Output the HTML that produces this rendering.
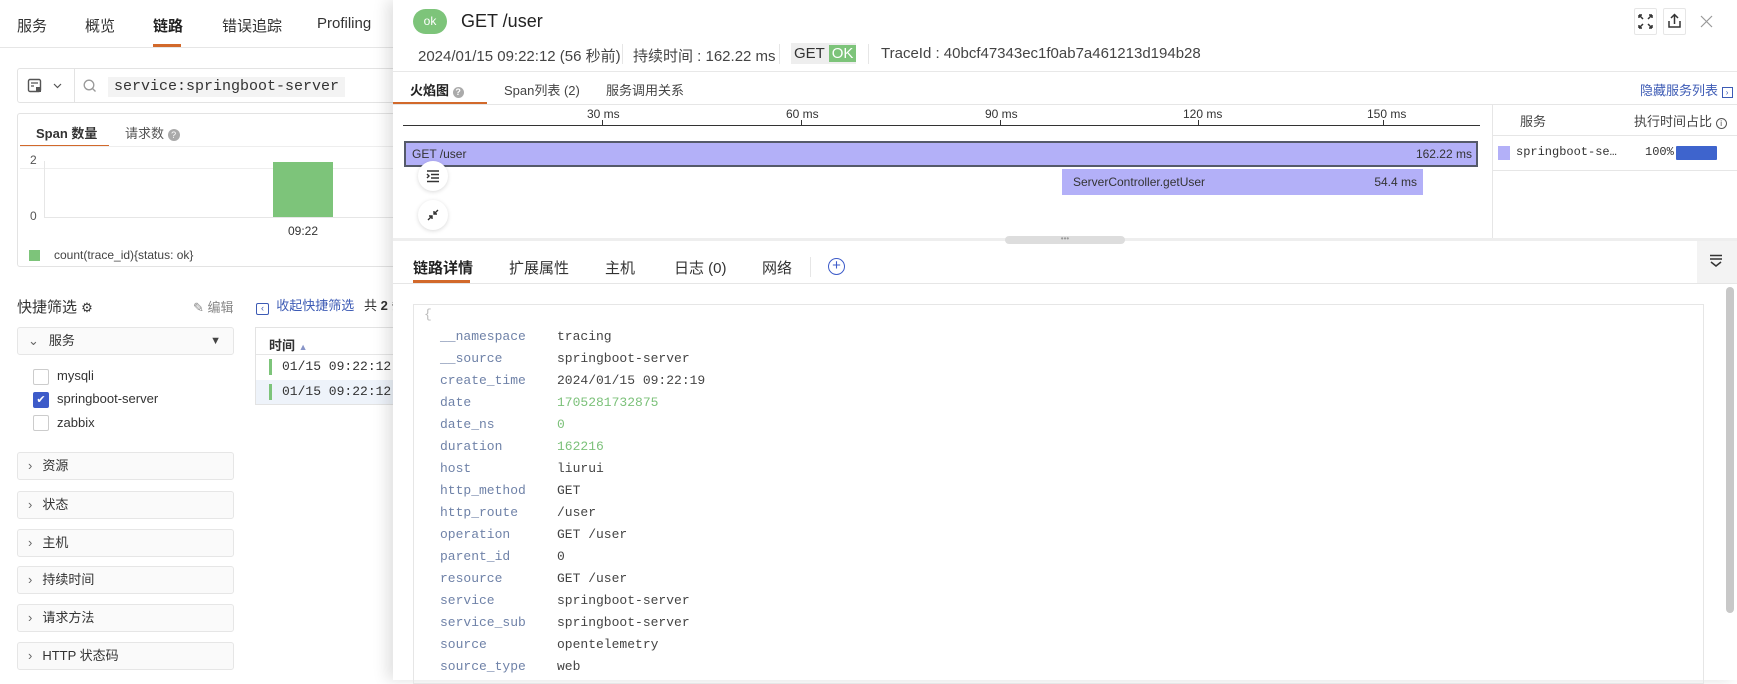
<!DOCTYPE html>
<html><head><meta charset="utf-8"><style>
*{box-sizing:border-box;margin:0;padding:0}
body{width:1737px;height:680px;overflow:hidden;position:relative;background:#fff;font-family:"Liberation Sans","Noto Sans CJK SC",sans-serif;color:#333;font-size:13px}
.a{position:absolute;white-space:nowrap}
.mono{font-family:"Liberation Mono","DejaVu Sans Mono",monospace}
.box{position:absolute;border:1px solid #e3e3e3;border-radius:3px;background:#fff}
.coll{position:absolute;left:17px;width:217px;height:28px;border:1px solid #e6e6e6;border-radius:3px;background:#fafafa;font-size:13px;line-height:26px;padding-left:10px;color:#333}
.coll span{color:#666;margin-right:10px}
.cb{position:absolute;width:16px;height:16px;border:1px solid #ccc;border-radius:2px;background:#fff}
.k{position:absolute;left:440px;color:#6f82a8;font-family:"Liberation Mono",monospace;font-size:13px}
.v{position:absolute;left:557px;color:#444;font-family:"Liberation Mono",monospace;font-size:13px}
.g{color:#7cc17a}
</style></head><body>
<!-- left nav -->
<div class="a" style="left:17px;top:15px;font-size:15px;color:#333">服务</div>
<div class="a" style="left:85px;top:15px;font-size:15px;color:#333">概览</div>
<div class="a" style="left:153px;top:15px;font-size:15px;font-weight:bold;color:#222">链路</div>
<div class="a" style="left:153px;top:44px;width:28px;height:3px;background:#d2692b"></div>
<div class="a" style="left:222px;top:15px;font-size:15px;color:#333">错误追踪</div>
<div class="a" style="left:317px;top:15px;font-size:15px;color:#333">Profiling</div>
<div class="a" style="left:0;top:47px;width:393px;height:1px;background:#e6e6e6"></div>
<!-- search -->
<div class="box" style="left:17px;top:68px;width:400px;height:35px"></div>
<div class="a" style="left:74px;top:68px;width:1px;height:35px;background:#e3e3e3"></div>
<svg class="a" style="left:27px;top:78px" width="16" height="16" viewBox="0 0 16 16"><rect x="1.5" y="1.5" width="12" height="12" rx="1.5" fill="none" stroke="#555" stroke-width="1.4"/><path d="M4 5h7M4 8h3" stroke="#555" stroke-width="1.3"/><rect x="9" y="9" width="5" height="5" fill="#555"/></svg>
<svg class="a" style="left:53px;top:83px" width="9" height="6" viewBox="0 0 9 6"><path d="M1 1l3.5 3.5L8 1" fill="none" stroke="#555" stroke-width="1.2"/></svg>
<svg class="a" style="left:83px;top:79px" width="14" height="14" viewBox="0 0 14 14"><circle cx="6" cy="6" r="4.8" fill="none" stroke="#999" stroke-width="1.3"/><path d="M9.5 9.5l3 3" stroke="#999" stroke-width="1.3"/></svg>
<div class="a mono" style="left:108px;top:77px;font-size:15px;color:#333;background:#f3f3f3;padding:0 6px;height:20px;line-height:19px">service:springboot-server</div>
<!-- chart card -->
<div class="box" style="left:17px;top:113px;width:400px;height:154px"></div>
<div class="a" style="left:36px;top:123px;font-size:13px;font-weight:bold;color:#333">Span 数量</div>
<div class="a" style="left:20px;top:168px;width:380px;height:1px;background:#eee"></div>
<div class="a" style="left:20px;top:167px;width:89px;height:2px;background:#d2692b;display:none"></div>
<div class="a" style="left:20px;top:145px;width:89px;height:2px;background:#d2692b"></div>
<div class="a" style="left:20px;top:146px;width:380px;height:1px;background:#eee"></div>
<div class="a" style="left:125px;top:123px;font-size:13px;color:#555">请求数 <span style="display:inline-block;width:12px;height:12px;border-radius:50%;background:#aaa;color:#fff;font-size:9px;text-align:center;line-height:12px">?</span></div>
<div class="a" style="left:30px;top:153px;font-size:12px;color:#555">2</div>
<div class="a" style="left:30px;top:209px;font-size:12px;color:#555">0</div>
<div class="a" style="left:44px;top:161px;width:1px;height:57px;background:#e6e6e6"></div>
<div class="a" style="left:44px;top:217px;width:350px;height:1px;background:#e6e6e6"></div>
<div class="a" style="left:273px;top:162px;width:60px;height:55px;background:#7dc47a"></div>
<div class="a" style="left:288px;top:224px;font-size:12px;color:#333">09:22</div>
<div class="a" style="left:29px;top:250px;width:11px;height:11px;background:#7dc47a"></div>
<div class="a" style="left:54px;top:248px;font-size:12px;color:#444">count(trace_id){status: ok}</div>
<!-- quick filters -->
<div class="a" style="left:17px;top:296px;font-size:15px;color:#333">快捷筛选 <span style="font-size:13px">⚙</span></div>
<div class="a" style="left:193px;top:297px;font-size:13px;color:#888">✎ 编辑</div>
<div class="a" style="left:256px;top:295px;font-size:13px;color:#3d5bb5"><span style="display:inline-block;width:13px;height:12px;border:1.3px solid #3d5bb5;border-radius:2px;font-size:9px;line-height:9px;text-align:center;vertical-align:-1px">‹</span>&nbsp; 收起快捷筛选</div>
<div class="a" style="left:364px;top:295px;font-size:13px;color:#333">共 <b>2</b> 条</div>
<div class="coll" style="top:327px;height:28px"><span>⌄</span>服务<b style="position:absolute;right:12px;font-size:11px;color:#444">▼</b></div>
<div class="cb" style="left:33px;top:369px"></div><div class="a" style="left:57px;top:368px;font-size:13px">mysqli</div>
<div class="cb" style="left:33px;top:392px;background:#3d5bc9;border-color:#3d5bc9;color:#fff;font-size:11px;text-align:center;line-height:14px">✔</div><div class="a" style="left:57px;top:391px;font-size:13px">springboot-server</div>
<div class="cb" style="left:33px;top:415px"></div><div class="a" style="left:57px;top:415px;font-size:13px">zabbix</div>
<div class="coll" style="top:452px"><span>›</span>资源</div>
<div class="coll" style="top:491px"><span>›</span>状态</div>
<div class="coll" style="top:529px"><span>›</span>主机</div>
<div class="coll" style="top:566px"><span>›</span>持续时间</div>
<div class="coll" style="top:604px"><span>›</span>请求方法</div>
<div class="coll" style="top:642px"><span>›</span>HTTP 状态码</div>
<!-- table -->
<div class="box" style="left:255px;top:327px;width:200px;height:78px;border-radius:0"></div>
<div class="a" style="left:269px;top:335px;font-size:13px;font-weight:bold">时间 <span style="color:#8895c8;font-size:9px">▲</span></div>
<div class="a" style="left:256px;top:354px;width:200px;height:1px;background:#e6e6e6"></div>
<div class="a" style="left:256px;top:380px;width:200px;height:24px;background:#eef3fa"></div>
<div class="a" style="left:269px;top:359px;width:3px;height:16px;background:#7dc47a"></div>
<div class="a mono" style="left:282px;top:359px;font-size:13px">01/15 09:22:12.9</div>
<div class="a" style="left:269px;top:384px;width:3px;height:16px;background:#7dc47a"></div>
<div class="a mono" style="left:282px;top:384px;font-size:13px">01/15 09:22:12.8</div>

<!-- drawer -->
<div class="a" style="left:393px;top:0;width:1344px;height:680px;background:#fff;box-shadow:-6px 0 14px rgba(0,0,0,0.12)"></div>
<div class="a" style="left:413px;top:9px;width:34px;height:25px;border-radius:13px;background:#7dc47a;color:#fff;font-size:12px;text-align:center;line-height:25px">ok</div>
<div class="a" style="left:461px;top:11px;font-size:18px;color:#222">GET /user</div>
<div class="a" style="left:418px;top:45px;font-size:15px;color:#444">2024/01/15 09:22:12 (56 秒前)</div>
<div class="a" style="left:622px;top:44px;width:1px;height:20px;background:#e6e6e6"></div>
<div class="a" style="left:633px;top:45px;font-size:15px;color:#444">持续时间 : 162.22 ms</div>
<div class="a" style="left:779px;top:44px;width:1px;height:20px;background:#e6e6e6"></div>
<div class="a" style="left:791px;top:43px;height:21px;background:#eee;font-size:15px;line-height:21px;padding:0 3px;color:#333">GET <span style="background:#7dc47a;color:#fff;padding:0 3px;margin-right:-3px">OK</span></div>
<div class="a" style="left:868px;top:44px;width:1px;height:20px;background:#e6e6e6"></div>
<div class="a" style="left:881px;top:45px;font-size:15px;color:#444">TraceId : 40bcf47343ec1f0ab7a461213d194b28</div>
<div class="a" style="left:1634px;top:8px;width:23px;height:27px;border:1px solid #e6e6e6;border-radius:2px"></div>
<svg class="a" style="left:1638px;top:14px" width="15" height="15" viewBox="0 0 15 15"><path d="M1 1l4 4M1 1v3M1 1h3M14 1l-4 4M14 1v3M14 1h-3M1 14l4-4M1 14v-3M1 14h3M14 14l-4-4M14 14v-3M14 14h-3" stroke="#333" stroke-width="1.5" fill="none"/></svg>
<div class="a" style="left:1663px;top:8px;width:23px;height:27px;border:1px solid #e6e6e6;border-radius:2px"></div>
<svg class="a" style="left:1667px;top:13px" width="15" height="16" viewBox="0 0 15 16"><path d="M7.5 11V2M4 5l3.5-3.5L11 5M2 8v6h11V8" stroke="#333" stroke-width="1.5" fill="none"/></svg>
<svg class="a" style="left:1700px;top:15px" width="13" height="13" viewBox="0 0 13 13"><path d="M1 1l11 11M12 1L1 12" stroke="#999" stroke-width="1.2"/></svg>
<div class="a" style="left:393px;top:71px;width:1344px;height:1px;background:#e8e8e8"></div>
<!-- flame tabs -->
<div class="a" style="left:410px;top:80px;font-size:13px;font-weight:bold;color:#222">火焰图 <span style="display:inline-block;width:11px;height:11px;border-radius:50%;background:#aaa;color:#fff;font-size:9px;text-align:center;line-height:11px">?</span></div>
<div class="a" style="left:393px;top:102px;width:94px;height:2px;background:#d2692b"></div>
<div class="a" style="left:504px;top:80px;font-size:13px;color:#444">Span列表 (2)</div>
<div class="a" style="left:606px;top:80px;font-size:13px;color:#444">服务调用关系</div>
<div class="a" style="left:1640px;top:80px;font-size:13px;color:#3d5bb5">隐藏服务列表 <span style="display:inline-block;width:11px;height:11px;border:1px solid #3d5bb5;font-size:8px;line-height:9px;text-align:center">›</span></div>
<div class="a" style="left:393px;top:104px;width:1344px;height:1px;background:#e6e6e6"></div>
<!-- axis -->
<div class="a" style="left:587px;top:107px;font-size:12px;color:#333">30 ms</div>
<div class="a" style="left:786px;top:107px;font-size:12px;color:#333">60 ms</div>
<div class="a" style="left:985px;top:107px;font-size:12px;color:#333">90 ms</div>
<div class="a" style="left:1183px;top:107px;font-size:12px;color:#333">120 ms</div>
<div class="a" style="left:1367px;top:107px;font-size:12px;color:#333">150 ms</div>
<div class="a" style="left:403px;top:125px;width:1077px;height:1px;background:#333"></div>
<div class="a" style="left:602px;top:120px;width:1px;height:5px;background:#333"></div>
<div class="a" style="left:801px;top:120px;width:1px;height:5px;background:#333"></div>
<div class="a" style="left:1000px;top:120px;width:1px;height:5px;background:#333"></div>
<div class="a" style="left:1198px;top:120px;width:1px;height:5px;background:#333"></div>
<div class="a" style="left:1383px;top:120px;width:1px;height:5px;background:#333"></div>
<div class="a" style="left:404px;top:141px;width:1074px;height:26px;background:#b3b0f8;border:2px solid #555a6a;font-size:12px;line-height:22px;padding:0 6px;color:#333">GET /user<span style="position:absolute;right:4px">162.22 ms</span></div>
<div class="a" style="left:1062px;top:169px;width:361px;height:26px;background:#b3b0f8;font-size:12px;line-height:26px;padding:0 11px;color:#333">ServerController.getUser<span style="position:absolute;right:6px">54.4 ms</span></div>
<div class="a" style="left:418px;top:161px;width:30px;height:30px;border-radius:50%;background:#fff;box-shadow:0 1px 4px rgba(0,0,0,0.15)"></div>
<svg class="a" style="left:426px;top:169px" width="14" height="14" viewBox="0 0 14 14"><path d="M1 2h12M5 5.5h8M5 9h8M1 12.5h12M1 5l2 2-2 2" stroke="#333" stroke-width="1.4" fill="none"/></svg>
<div class="a" style="left:418px;top:200px;width:30px;height:30px;border-radius:50%;background:#fff;box-shadow:0 1px 4px rgba(0,0,0,0.15)"></div>
<svg class="a" style="left:427px;top:209px" width="12" height="12" viewBox="0 0 12 12"><path d="M1 11l4-4M2 7h3v3M11 1L7 5M7 2v3h3" stroke="#333" stroke-width="1.4" fill="none"/></svg>
<!-- services panel -->
<div class="a" style="left:1492px;top:105px;width:1px;height:134px;background:#e6e6e6"></div>
<div class="a" style="left:1520px;top:111px;font-size:13px;color:#444">服务</div>
<div class="a" style="left:1634px;top:111px;font-size:13px;color:#444">执行时间占比 <span style="display:inline-block;width:11px;height:11px;border:1px solid #555;border-radius:50%;font-size:8px;line-height:9px;text-align:center">i</span></div>
<div class="a" style="left:1493px;top:135px;width:244px;height:1px;background:#e6e6e6"></div>
<div class="a" style="left:1498px;top:146px;width:12px;height:14px;background:#b3b0f8"></div>
<div class="a mono" style="left:1516px;top:145px;font-size:12px;color:#333">springboot-se…</div>
<div class="a mono" style="left:1645px;top:145px;font-size:12px;color:#333">100%</div>
<div class="a" style="left:1676px;top:146px;width:41px;height:14px;background:#3e64cd;border-radius:1px"></div>
<div class="a" style="left:1493px;top:170px;width:244px;height:1px;background:#e6e6e6"></div>
<!-- splitter -->
<div class="a" style="left:393px;top:238px;width:1344px;height:3px;background:#eee"></div>
<div class="a" style="left:1005px;top:236px;width:120px;height:8px;border-radius:4px;background:#ddd;text-align:center;font-size:8px;line-height:6px;color:#999">•••</div>
<div class="a" style="left:1697px;top:241px;width:40px;height:42px;background:#f3f3f3"></div>
<svg class="a" style="left:1709px;top:254px" width="14" height="14" viewBox="0 0 14 14"><path d="M1 1.5h12M1 5h12M2 8l5 4 5-4" stroke="#333" stroke-width="1.5" fill="none"/></svg>
<!-- detail tabs -->
<div class="a" style="left:413px;top:257px;font-size:15px;font-weight:bold;color:#222">链路详情</div>
<div class="a" style="left:413px;top:280px;width:57px;height:3px;background:#d2692b"></div>
<div class="a" style="left:509px;top:257px;font-size:15px;color:#333">扩展属性</div>
<div class="a" style="left:605px;top:257px;font-size:15px;color:#333">主机</div>
<div class="a" style="left:674px;top:257px;font-size:15px;color:#333">日志 (0)</div>
<div class="a" style="left:762px;top:257px;font-size:15px;color:#333">网络</div>
<div class="a" style="left:810px;top:257px;width:1px;height:20px;background:#e6e6e6"></div>
<div class="a" style="left:828px;top:258px;width:17px;height:17px;border:1.5px solid #3d5bc9;border-radius:50%;color:#3d5bc9;text-align:center;line-height:13px;font-size:15px">+</div>
<div class="a" style="left:393px;top:283px;width:1344px;height:1px;background:#e6e6e6"></div>
<!-- json -->
<div class="a" style="left:413px;top:304px;width:1291px;height:380px;border:1px solid #e6e6e6"></div>
<div class="a" style="left:1726px;top:287px;width:8px;height:326px;border-radius:4px;background:#c8c8c8"></div>
<div class="a mono" style="left:424px;top:307px;color:#bbb;font-size:13px">{</div>
<div class="k" style="top:329px">__namespace</div><div class="v" style="top:329px">tracing</div>
<div class="k" style="top:351px">__source</div><div class="v" style="top:351px">springboot-server</div>
<div class="k" style="top:373px">create_time</div><div class="v" style="top:373px">2024/01/15 09:22:19</div>
<div class="k" style="top:395px">date</div><div class="v g" style="top:395px">1705281732875</div>
<div class="k" style="top:417px">date_ns</div><div class="v g" style="top:417px">0</div>
<div class="k" style="top:439px">duration</div><div class="v g" style="top:439px">162216</div>
<div class="k" style="top:461px">host</div><div class="v" style="top:461px">liurui</div>
<div class="k" style="top:483px">http_method</div><div class="v" style="top:483px">GET</div>
<div class="k" style="top:505px">http_route</div><div class="v" style="top:505px">/user</div>
<div class="k" style="top:527px">operation</div><div class="v" style="top:527px">GET /user</div>
<div class="k" style="top:549px">parent_id</div><div class="v" style="top:549px">0</div>
<div class="k" style="top:571px">resource</div><div class="v" style="top:571px">GET /user</div>
<div class="k" style="top:593px">service</div><div class="v" style="top:593px">springboot-server</div>
<div class="k" style="top:615px">service_sub</div><div class="v" style="top:615px">springboot-server</div>
<div class="k" style="top:637px">source</div><div class="v" style="top:637px">opentelemetry</div>
<div class="k" style="top:659px">source_type</div><div class="v" style="top:659px">web</div>
</body></html>
